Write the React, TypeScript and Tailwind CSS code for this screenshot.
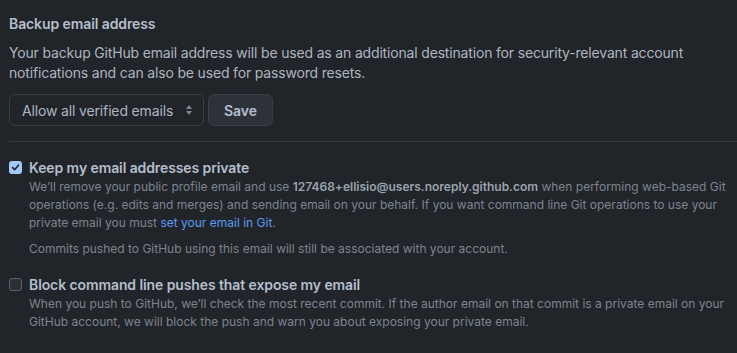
import React from "react";

export default function App() {
  return (
    <div className="min-h-[353px] w-full bg-[#212429] text-[#adbac7]" style={{ fontFamily: "Inter, 'Noto Sans', sans-serif" }}>
      <div className="pl-[9px] pt-[14px]">
        <h2 className="text-[14px] leading-[20px] font-semibold tracking-[-0.1px] text-[#b4bfcc]">Backup email address</h2>
        <p className="mt-[9px] text-[14px] leading-[20px] tracking-[-0.17px] text-[#adb6c0]">
          Your backup GitHub email address will be used as an additional destination for security-relevant account notifications and can also be used for password resets.
        </p>
        <div className="mt-[11px] flex gap-[4px]">
          <div className="flex h-[32px] w-[195px] items-center justify-between rounded-[6px] border border-[#3a3f46] bg-[#212429] pl-[12px] pr-[10px] text-[14px] tracking-[-0.15px] text-[#adb6c0]">
            <span>Allow all verified emails</span>
            <svg width="8" height="12" viewBox="0 0 8 12" className="text-[#7d8590]">
              <path d="M4 1 L7 5 L1 5 Z" fill="currentColor" />
              <path d="M4 11 L7 7 L1 7 Z" fill="currentColor" />
            </svg>
          </div>
          <button className="h-[32px] w-[65px] rounded-[6px] border border-[#3a3f46] bg-[#2d3139] text-[14px] font-semibold text-[#b4bfcc]">
            Save
          </button>
        </div>
      </div>
      <div className="ml-[9px] mt-[15px] h-px bg-[#363a40]" />
      <div className="pl-[9px] pr-[8px]">
        <div className="mt-[16px] flex items-start gap-[7px]">
          <div className="mt-[3px] flex h-[13px] w-[13px] shrink-0 items-center justify-center rounded-[3px] bg-[#a3c6fb]">
            <svg width="9" height="9" viewBox="0 0 10 10">
              <path d="M1.8 5.2 L4 7.4 L8.3 2.4" fill="none" stroke="#1f2328" strokeWidth="1.8" strokeLinecap="round" strokeLinejoin="round" />
            </svg>
          </div>
          <div>
            <div className="text-[14px] leading-[20px] font-semibold tracking-[-0.1px] text-[#b4bfcc]">Keep my email addresses private</div>
            <p className="text-[12px] leading-[18px] text-[#7d8590]">
              We’ll remove your public profile email and use <span className="font-semibold text-[#9aa3ad]">127468+ellisio@users.noreply.github.com</span> when performing web-based Git operations (e.g. edits and merges) and sending email on your behalf. If you want command line Git operations to use your private email you must <span className="text-[#5b9bf0]">set your email in Git</span>.
            </p>
            <p className="mt-[8px] text-[12px] leading-[18px] text-[#7d8590]">
              Commits pushed to GitHub using this email will still be associated with your account.
            </p>
          </div>
        </div>
        <div className="mt-[17px] flex items-start gap-[7px]">
          <div className="mt-[3px] h-[13px] w-[13px] shrink-0 rounded-[3px] border border-[#5c626a] bg-[#2b2f35]" />
          <div>
            <div className="text-[14px] leading-[20px] font-semibold tracking-[-0.1px] text-[#b4bfcc]">Block command line pushes that expose my email</div>
            <p className="text-[12px] leading-[18px] text-[#7d8590]">
              When you push to GitHub, we’ll check the most recent commit. If the author email on that commit is a private email on your GitHub account, we will block the push and warn you about exposing your private email.
            </p>
          </div>
        </div>
      </div>
    </div>
  );
}
